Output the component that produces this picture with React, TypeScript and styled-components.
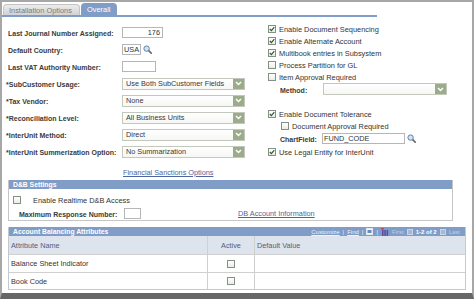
import React from "react";
import styled, { createGlobalStyle } from "styled-components";

const BLUE = "#7f9dc6";

const GlobalStyle = createGlobalStyle`
  html, body { margin: 0; padding: 0; background: #fff; }
  body { font-family: "Liberation Sans", Arial, sans-serif; }
`;

const Frame = styled.div`
  box-sizing: border-box;
  width: 474px;
  height: 299px;
  border-style: solid;
  border-color: #a7a7a7;
  border-width: 2px 2px 6px 2px;
  border-bottom-color: #676767;
  background: #fff;
  overflow: hidden;
  display: flex;
  flex-direction: column;
  color: #333;
  font-family: "Liberation Sans", Arial, sans-serif;
`;

const TabBar = styled.div`
  box-sizing: border-box;
  flex: none;
  display: flex;
  align-items: flex-end;
  gap: 1px;
  width: 375px;
  height: 15px;
  padding-left: 1px;
  border-bottom: 2px solid ${BLUE};
`;

const Tab = styled.div<{ $active?: boolean; $w: number }>`
  box-sizing: border-box;
  width: ${(p) => p.$w}px;
  height: ${(p) => (p.$active ? 12 : 11)}px;
  padding-left: ${(p) => (p.$active ? 6 : 5)}px;
  border-radius: 4px 4px 0 0;
  background: ${(p) =>
    p.$active ? BLUE : "linear-gradient(#ececec, #d2d2d2)"};
  color: ${(p) => (p.$active ? "#fff" : "#7a7a7a")};
  border: ${(p) => (p.$active ? "none" : "1px solid #c4c4c4")};
  border-bottom: none;
  font-size: 7.4px;
  display: flex;
  align-items: center;
  white-space: nowrap;
`;

const Top = styled.div`
  flex: none;
  display: flex;
  height: 163px;
`;

const LeftCol = styled.div`
  box-sizing: border-box;
  width: 264px;
  flex: none;
  padding-top: 7px;
  display: flex;
  flex-direction: column;
`;

const RightCol = styled.div`
  flex: 1;
  padding: 6px 0 0 2px;
  display: flex;
  flex-direction: column;
`;

const FormRow = styled.div<{ $h?: number; $pl?: number; $mt?: number }>`
  display: flex;
  align-items: center;
  height: ${(p) => p.$h ?? 17}px;
  padding-left: ${(p) => p.$pl ?? 0}px;
  margin-top: ${(p) => p.$mt ?? 0}px;
`;

const Label = styled.div<{ $w: number; $pl?: number }>`
  box-sizing: border-box;
  flex: none;
  width: ${(p) => p.$w}px;
  padding-left: ${(p) => p.$pl ?? 0}px;
  padding-top: 2px;
  font-size: 7px;
  font-weight: bold;
  color: #3a3a3a;
  white-space: nowrap;
`;

const TextBox = styled.div<{ $w: number; $right?: boolean }>`
  box-sizing: border-box;
  flex: none;
  width: ${(p) => p.$w}px;
  height: 11px;
  border: 1px solid #b6b6b6;
  background: #fff;
  font-size: 7.3px;
  line-height: 9px;
  color: #333;
  padding: 0 2px 0 1px;
  text-align: ${(p) => (p.$right ? "right" : "left")};
  white-space: nowrap;
  overflow: hidden;
`;

const SelectBox = styled.div<{ $w: number }>`
  box-sizing: border-box;
  flex: none;
  width: ${(p) => p.$w}px;
  height: 12px;
  display: flex;
  border: 1px solid #c2c8bb;
  background: linear-gradient(#ffffff, #f6f6f4);
`;

const SelectText = styled.span`
  flex: 1;
  padding-left: 3px;
  font-size: 7.3px;
  line-height: 10px;
  color: #383838;
  white-space: nowrap;
  overflow: hidden;
`;

const SelectButton = styled.span`
  flex: none;
  width: 11px;
  background: #9cab89;
  display: flex;
  align-items: center;
  justify-content: center;
`;

const LinkText = styled.span`
  font-size: 7.3px;
  color: #50669c;
  text-decoration: underline;
  white-space: nowrap;
`;

const LinkRow = styled.div`
  height: 9px;
  margin-top: 8px;
  padding-left: 121px;
  display: flex;
  align-items: center;
`;

const CheckRow = styled.div<{ $indent?: number; $mt?: number; $h?: number; $gap?: number }>`
  display: flex;
  align-items: center;
  gap: ${(p) => p.$gap ?? 3}px;
  height: ${(p) => p.$h ?? 12}px;
  padding-left: ${(p) => p.$indent ?? 0}px;
  margin-top: ${(p) => p.$mt ?? 0}px;
`;

const Box = styled.span`
  box-sizing: border-box;
  flex: none;
  width: 8px;
  height: 8px;
  border: 1px solid #858f85;
  background: linear-gradient(#ffffff, #e9ece6);
  display: flex;
  align-items: center;
  justify-content: center;
`;

const CheckLabel = styled.span`
  font-size: 7.4px;
  color: #333;
  white-space: nowrap;
`;

const Section = styled.div`
  box-sizing: border-box;
  flex: none;
  margin-left: 6px;
  width: 445px;
  border: 1px solid #c6c6c6;
  border-top: none;
`;

const BandHeader = styled.div`
  height: 9px;
  background: ${BLUE};
  display: flex;
  align-items: center;
  padding-left: 4px;
  color: #fff;
  font-size: 6.8px;
  font-weight: bold;
  white-space: nowrap;
`;

const SectionBody = styled.div`
  padding-top: 5px;
  display: flex;
  flex-direction: column;
`;

const LinkSlot = styled.span`
  margin-left: 97px;
  display: flex;
  align-items: center;
`;

const GridBox = styled.div`
  box-sizing: border-box;
  flex: none;
  margin: 6px 0 0 6px;
  width: 458px;
  border: 1px solid #c4c9d1;
  border-top: none;
`;

const Nav = styled.div`
  margin-left: auto;
  display: flex;
  align-items: center;
  gap: 3px;
  padding-right: 5px;
  font-size: 6px;
  font-weight: normal;
`;

const NavLink = styled.span`
  color: #eef3fa;
  text-decoration: underline;
`;

const NavSep = styled.span`
  color: #eef3fa;
`;

const NavDim = styled.span`
  color: #c3d0e3;
`;

const NavCount = styled.span`
  color: #fff;
  font-weight: bold;
`;

const TRow = styled.div<{ $head?: boolean; $h: number; $last?: boolean }>`
  display: grid;
  grid-template-columns: 198px 47px 1fr;
  height: ${(p) => p.$h}px;
  background: ${(p) => (p.$head ? "#dee4ed" : "#fff")};
  border-bottom: ${(p) => (p.$last ? "none" : "1px solid #d0d0d0")};
`;

const TCell = styled.div<{ $center?: boolean; $head?: boolean; $first?: boolean }>`
  display: flex;
  align-items: center;
  justify-content: ${(p) => (p.$center ? "center" : "flex-start")};
  padding-left: ${(p) => (p.$center ? 0 : 2)}px;
  border-left: ${(p) => (p.$first ? "none" : "1px solid #d0d0d0")};
  font-size: 7.3px;
  color: ${(p) => (p.$head ? "#4f5f7c" : "#353535")};
  white-space: nowrap;
`;

const Chevron = () => (
  <svg width="7" height="5" viewBox="0 0 7 5">
    <polyline points="1,1 3.5,3.6 6,1" fill="none" stroke="#fff" strokeWidth="1.4" />
  </svg>
);

const Lookup = () => (
  <svg width="9" height="9" viewBox="0 0 9 9" style={{ marginLeft: 2, flex: "none" }}>
    <line x1="5.2" y1="5.2" x2="8.2" y2="8.2" stroke="#6c6c6c" strokeWidth="1.7" strokeLinecap="round" />
    <circle cx="3.6" cy="3.6" r="2.7" fill="#d3e3f4" stroke="#5f7fa8" strokeWidth="1" />
  </svg>
);

const Check = ({ on }: { on?: boolean }) => (
  <Box>
    {on && (
      <svg width="6" height="6" viewBox="0 0 6 6">
        <polyline points="0.8,3 2.4,4.6 5.3,1.2" fill="none" stroke="#2f5a30" strokeWidth="1.2" />
      </svg>
    )}
  </Box>
);

const Select = ({ w, text }: { w: number; text: string }) => (
  <SelectBox $w={w}>
    <SelectText>{text}</SelectText>
    <SelectButton>
      <Chevron />
    </SelectButton>
  </SelectBox>
);

const ViewIcon = () => (
  <svg width="7" height="7" viewBox="0 0 7 7">
    <rect x="0.5" y="0.5" width="6" height="6" fill="#f4f7fb" stroke="#dfe7f2" />
    <rect x="1.5" y="2" width="4" height="3" fill="#6b89b8" />
  </svg>
);

const GridIcon = () => (
  <svg width="8" height="8" viewBox="0 0 8 8">
    <rect x="1" y="2" width="1.5" height="6" fill="#5a4aa0" />
    <rect x="3.3" y="2" width="1.5" height="6" fill="#5a4aa0" />
    <rect x="5.6" y="2" width="1.5" height="6" fill="#5a4aa0" />
    <rect x="0" y="0" width="3" height="1.5" fill="#d04040" />
  </svg>
);

const ArrowBox = () => (
  <svg width="6" height="6" viewBox="0 0 6 6">
    <rect x="0.5" y="0.5" width="5" height="5" fill="#a9b9d2" stroke="#c9d5e6" />
  </svg>
);

const required = [
  { label: "*SubCustomer Usage:", value: "Use Both SubCustomer Fields" },
  { label: "*Tax Vendor:", value: "None" },
  { label: "*Reconciliation Level:", value: "All Business Units" },
  { label: "*InterUnit Method:", value: "Direct" },
  { label: "*InterUnit Summerization Option:", value: "No Summarization" },
];

const flags = [
  { text: "Enable Document Sequencing", on: true },
  { text: "Enable Alternate Account", on: true },
  { text: "Multibook entries in Subsystem", on: true },
  { text: "Process Partition for GL", on: false },
  { text: "Item Approval Required", on: false },
];

const rows = ["Balance Sheet Indicator", "Book Code"];

export default function App() {
  return (
    <>
      <GlobalStyle />
      <Frame>
        <TabBar>
          <Tab $w={77}>Installation Options</Tab>
          <Tab $w={36} $active>
            Overall
          </Tab>
        </TabBar>

        <Top>
          <LeftCol>
            <FormRow>
              <Label $w={120} $pl={6}>Last Journal Number Assigned:</Label>
              <TextBox $w={41} $right>
                176
              </TextBox>
            </FormRow>
            <FormRow>
              <Label $w={120} $pl={6}>Default Country:</Label>
              <TextBox $w={19}>USA</TextBox>
              <Lookup />
            </FormRow>
            <FormRow>
              <Label $w={120} $pl={6}>Last VAT Authority Number:</Label>
              <TextBox $w={34} />
            </FormRow>
            {required.map((r) => (
              <FormRow key={r.label}>
                <Label $w={120} $pl={4}>
                  {r.label}
                </Label>
                <Select w={123} text={r.value} />
              </FormRow>
            ))}
            <LinkRow>
              <LinkText>Financial Sanctions Options</LinkText>
            </LinkRow>
          </LeftCol>

          <RightCol>
            {flags.map((f) => (
              <CheckRow key={f.text}>
                <Check on={f.on} />
                <CheckLabel>{f.text}</CheckLabel>
              </CheckRow>
            ))}
            <FormRow $h={12} $pl={12}>
              <Label $w={43}>Method:</Label>
              <Select w={124} text="" />
            </FormRow>
            <CheckRow $mt={13}>
              <Check on />
              <CheckLabel>Enable Document Tolerance</CheckLabel>
            </CheckRow>
            <CheckRow $indent={13}>
              <Check />
              <CheckLabel>Document Approval Required</CheckLabel>
            </CheckRow>
            <FormRow $h={12} $pl={12}>
              <Label $w={42}>ChartField:</Label>
              <TextBox $w={83}>FUND_CODE</TextBox>
              <Lookup />
            </FormRow>
            <CheckRow $mt={2}>
              <Check on />
              <CheckLabel>Use Legal Entity for InterUnit</CheckLabel>
            </CheckRow>
          </RightCol>
        </Top>

        <Section>
          <BandHeader>D&amp;B Settings</BandHeader>
          <SectionBody>
            <CheckRow $indent={4} $h={12} $gap={12}>
              <Check />
              <CheckLabel>Enable Realtime D&amp;B Access</CheckLabel>
            </CheckRow>
            <FormRow $h={14} $pl={10}>
              <Label $w={105}>Maximum Response Number:</Label>
              <TextBox $w={17} />
              <LinkSlot>
                <LinkText>DB Account Information</LinkText>
              </LinkSlot>
            </FormRow>
          </SectionBody>
        </Section>

        <GridBox>
          <BandHeader>
            Account Balancing Attributes
            <Nav>
              <NavLink>Customize</NavLink>
              <NavSep>|</NavSep>
              <NavLink>Find</NavLink>
              <NavSep>|</NavSep>
              <ViewIcon />
              <NavSep>|</NavSep>
              <GridIcon />
              <NavDim>First</NavDim>
              <ArrowBox />
              <NavCount>1-2 of 2</NavCount>
              <ArrowBox />
              <NavDim>Last</NavDim>
            </Nav>
          </BandHeader>
          <TRow $head $h={18}>
            <TCell $head $first>
              Attribute Name
            </TCell>
            <TCell $head $center>
              Active
            </TCell>
            <TCell $head>Default Value</TCell>
          </TRow>
          {rows.map((r, i) => (
            <TRow key={r} $h={i === rows.length - 1 ? 16 : 17} $last={i === rows.length - 1}>
              <TCell $first>{r}</TCell>
              <TCell $center>
                <Check />
              </TCell>
              <TCell />
            </TRow>
          ))}
        </GridBox>
      </Frame>
    </>
  );
}
